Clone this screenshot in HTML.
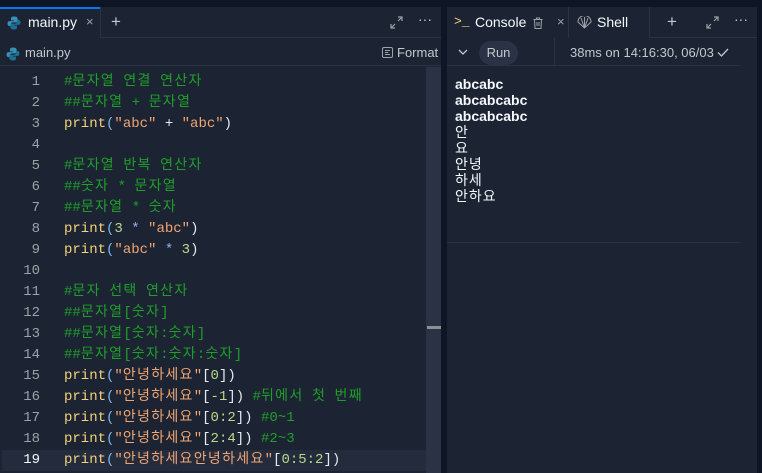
<!DOCTYPE html>
<html><head><meta charset="utf-8"><style>
*{margin:0;padding:0;box-sizing:border-box}
body{width:762px;height:473px;background:#0e1525;position:relative;overflow:hidden;font-family:"Liberation Sans","Noto Sans CJK KR",sans-serif;color:#f5f9fc}
.panel{position:absolute;background:#1c2333}
#ed{left:0;top:7px;width:441px;height:466px}
#co{left:447px;top:7px;width:310px;height:466px}
.tabbar{position:absolute;left:0;top:0;right:0;height:31px;border-bottom:1px solid #2b3245}
.abs{position:absolute}
.code{position:absolute;left:0;top:65px;font-family:"Liberation Mono","Noto Sans CJK KR",monospace;font-size:14px}
.ln{position:absolute;height:21px;line-height:21px;white-space:pre}
.num{width:40px;text-align:right;color:#9da2a6;left:0}
.txt{left:64px}
.k{letter-spacing:1.3px}
.c{color:#1f9f2a}.p{color:#f2d27a}.s{color:#f1a572}.n{color:#b6d98a}.b{color:#7fb8ef}.o{color:#8fb4f5}.w{color:#e6e9ee}
.out{position:absolute;left:8px;font-size:14px;line-height:16px}
.outk{font-family:"Noto Sans CJK KR",sans-serif;letter-spacing:1px}
</style></head><body>
<div class="panel" id="ed">
 <div class="tabbar" style="left:101px"></div>
 <div class="abs" style="left:0;top:0;width:101px;height:2px;background:#0079f2"></div>
 <div class="abs" style="left:100px;top:0;width:1px;height:31px;background:#2b3245"></div>
 <svg class="abs" style="left:7px;top:9px" width="14" height="14" viewBox="0 0 14 14"><path d="M7 0.5c-3 0-3 1.3-3 2.5v1.5h3v.6H2.5C1 5.1.5 6.3.5 7.5s.6 2.6 2 2.6H4V8.4c0-1.2 1-2 2-2h3c1 0 1.7-.8 1.7-1.7V3C10.7 1.6 9.6.5 7 .5z" fill="#3a8fb7"/><path d="M7 13.5c3 0 3-1.3 3-2.5V9.5H7v-.6h4.5c1.5 0 2-1.2 2-2.4s-.6-2.6-2-2.6H10v1.7c0 1.2-1 2-2 2H5c-1 0-1.7.8-1.7 1.7V11c0 1.4 1.1 2.5 3.7 2.5z" fill="#1d6f93"/></svg>
 <div class="abs" style="left:28px;top:7px;font-size:14px;color:#f5f9fc">main.py</div>
 <div class="abs" style="left:86px;top:7px;font-size:13px;color:#9da2a6">×</div>
 <div class="abs" style="left:111px;top:5px;font-size:17px;color:#c2c8cc">+</div>
 <svg class="abs" style="left:390px;top:9px" width="13" height="13" viewBox="0 0 13 13" fill="none" stroke="#9da2a6" stroke-width="1.2"><path d="M8 1h4v4M12 1L8 5M5 12H1V8M1 12l4-4"/></svg>
 <div class="abs" style="left:418px;top:4px;font-size:14px;color:#c2c8cc">···</div>
 <div class="abs" style="left:0;top:31px;width:441px;height:28px;border-bottom:1px solid #2b3245"></div>
 <svg class="abs" style="left:6px;top:40px" width="14" height="14" viewBox="0 0 14 14"><path d="M7 0.5c-3 0-3 1.3-3 2.5v1.5h3v.6H2.5C1 5.1.5 6.3.5 7.5s.6 2.6 2 2.6H4V8.4c0-1.2 1-2 2-2h3c1 0 1.7-.8 1.7-1.7V3C10.7 1.6 9.6.5 7 .5z" fill="#3a8fb7"/><path d="M7 13.5c3 0 3-1.3 3-2.5V9.5H7v-.6h4.5c1.5 0 2-1.2 2-2.4s-.6-2.6-2-2.6H10v1.7c0 1.2-1 2-2 2H5c-1 0-1.7.8-1.7 1.7V11c0 1.4 1.1 2.5 3.7 2.5z" fill="#1d6f93"/></svg>
 <div class="abs" style="left:25px;top:38px;font-size:13px;color:#c2c8cc">main.py</div>
 <svg class="abs" style="left:382px;top:40px" width="11" height="11" viewBox="0 0 11 11" fill="none" stroke="#9da2a6"><rect x=".5" y=".5" width="10" height="10" rx="1.5"/><path d="M3 3.5h5M3 5.5h3M3 7.5h5"/></svg>
 <div class="abs" style="left:397px;top:38px;font-size:13px;color:#c2c8cc">Format</div>
 <div class="abs" style="left:426px;top:60px;width:15px;height:406px;background:#2b3245"></div>
 <div class="abs" style="left:427px;top:319px;width:14px;height:3px;background:#8a8f98"></div>
 <div class="abs" style="left:2px;top:443px;width:424px;height:21px;background:#232b3d"></div>
 <div class="code">
  <div class="ln num" style="top:0">1</div><div class="ln txt c" style="top:0">#<span class="k">문자열</span> <span class="k">연결</span> <span class="k">연산자</span></div>
  <div class="ln num" style="top:21px">2</div><div class="ln txt c" style="top:21px">##<span class="k">문자열</span> + <span class="k">문자열</span></div>
  <div class="ln num" style="top:42px">3</div><div class="ln txt" style="top:42px"><span class="p">print</span><span class="b">(</span><span class="s">"abc"</span> <span class="w">+</span> <span class="s">"abc"</span><span class="w">)</span></div>
  <div class="ln num" style="top:63px">4</div>
  <div class="ln num" style="top:84px">5</div><div class="ln txt c" style="top:84px">#<span class="k">문자열</span> <span class="k">반복</span> <span class="k">연산자</span></div>
  <div class="ln num" style="top:105px">6</div><div class="ln txt c" style="top:105px">##<span class="k">숫자</span> * <span class="k">문자열</span></div>
  <div class="ln num" style="top:126px">7</div><div class="ln txt c" style="top:126px">##<span class="k">문자열</span> * <span class="k">숫자</span></div>
  <div class="ln num" style="top:147px">8</div><div class="ln txt" style="top:147px"><span class="p">print</span><span class="b">(</span><span class="n">3</span> <span class="o">*</span> <span class="s">"abc"</span><span class="w">)</span></div>
  <div class="ln num" style="top:168px">9</div><div class="ln txt" style="top:168px"><span class="p">print</span><span class="b">(</span><span class="s">"abc"</span> <span class="o">*</span> <span class="n">3</span><span class="w">)</span></div>
  <div class="ln num" style="top:189px">10</div>
  <div class="ln num" style="top:210px">11</div><div class="ln txt c" style="top:210px">#<span class="k">문자</span> <span class="k">선택</span> <span class="k">연산자</span></div>
  <div class="ln num" style="top:231px">12</div><div class="ln txt c" style="top:231px">##<span class="k">문자열</span>[<span class="k">숫자</span>]</div>
  <div class="ln num" style="top:252px">13</div><div class="ln txt c" style="top:252px">##<span class="k">문자열</span>[<span class="k">숫자</span>:<span class="k">숫자</span>]</div>
  <div class="ln num" style="top:273px">14</div><div class="ln txt c" style="top:273px">##<span class="k">문자열</span>[<span class="k">숫자</span>:<span class="k">숫자</span>:<span class="k">숫자</span>]</div>
  <div class="ln num" style="top:294px">15</div><div class="ln txt" style="top:294px"><span class="p">print</span><span class="b">(</span><span class="s">"<span class="k">안녕하세요</span>"</span><span class="w">[</span><span class="n">0</span><span class="w">])</span></div>
  <div class="ln num" style="top:315px">16</div><div class="ln txt" style="top:315px"><span class="p">print</span><span class="b">(</span><span class="s">"<span class="k">안녕하세요</span>"</span><span class="w">[</span><span class="n">-1</span><span class="w">])</span> <span class="c">#<span class="k">뒤에서</span> <span class="k">첫</span> <span class="k">번째</span></span></div>
  <div class="ln num" style="top:336px">17</div><div class="ln txt" style="top:336px"><span class="p">print</span><span class="b">(</span><span class="s">"<span class="k">안녕하세요</span>"</span><span class="w">[</span><span class="n">0:2</span><span class="w">])</span> <span class="c">#0~1</span></div>
  <div class="ln num" style="top:357px">18</div><div class="ln txt" style="top:357px"><span class="p">print</span><span class="b">(</span><span class="s">"<span class="k">안녕하세요</span>"</span><span class="w">[</span><span class="n">2:4</span><span class="w">])</span> <span class="c">#2~3</span></div>
  <div class="ln num" style="top:378px;color:#f5f9fc">19</div><div class="ln txt" style="top:378px"><span class="p">print</span><span class="b">(</span><span class="s">"<span class="k">안녕하세요안녕하세요</span>"</span><span class="w">[</span><span class="n">0:5:2</span><span class="w">])</span></div>
 </div>
</div>
<div class="panel" id="co">
 <div class="tabbar" style="left:202px"></div>
 <div class="abs" style="left:121px;top:0;width:1px;height:31px;background:#2b3245"></div>
 <div class="abs" style="left:202px;top:0;width:1px;height:31px;background:#2b3245"></div>
 <div class="abs" style="left:7px;top:7px;font-size:13px;color:#f2d27a;font-family:'Liberation Mono',monospace">&gt;_</div>
 <div class="abs" style="left:28px;top:7px;font-size:14px;color:#f5f9fc">Console</div>
 <svg class="abs" style="left:86px;top:10px" width="10" height="12" viewBox="0 0 10 12" fill="none" stroke="#9da2a6"><path d="M.5 2.5h9M3.5 2.5V1h3v1.5M1.5 2.5l.5 9h6l.5-9M4 5v4M6 5v4"/></svg>
 <div class="abs" style="left:110px;top:7px;font-size:13px;color:#9da2a6">×</div>
 <svg class="abs" style="left:130px;top:9px" width="15" height="13" viewBox="0 0 15 13" fill="none" stroke="#9da2a6"><path d="M7.5 12L1 6a6.5 6.5 0 0113 0zM7.5 12L4 2M7.5 12V1M7.5 12l3.5-10"/></svg>
 <div class="abs" style="left:150px;top:7px;font-size:14px;color:#f5f9fc">Shell</div>
 <div class="abs" style="left:220px;top:5px;font-size:17px;color:#c2c8cc">+</div>
 <svg class="abs" style="left:259px;top:9px" width="13" height="13" viewBox="0 0 13 13" fill="none" stroke="#9da2a6" stroke-width="1.2"><path d="M8 1h4v4M12 1L8 5M5 12H1V8M1 12l4-4"/></svg>
 <div class="abs" style="left:287px;top:4px;font-size:14px;color:#c2c8cc">···</div>
 <div class="abs" style="left:0;top:31px;width:293px;height:28px;border-bottom:1px solid #2b3245"></div>
 <svg class="abs" style="left:11px;top:42px" width="10" height="7" viewBox="0 0 10 7" fill="none" stroke="#c2c8cc" stroke-width="1.3"><path d="M1 1l4 4 4-4"/></svg>
 <div class="abs" style="left:32px;top:34px;width:39px;height:24px;border-radius:12px;background:#2b3245;font-size:13px;color:#c2c8cc;text-align:center;line-height:24px">Run</div>
 <div class="abs" style="left:107px;top:31px;width:1px;height:28px;background:#2b3245"></div>
 <div class="abs" style="left:123px;top:38px;font-size:13px;color:#c2c8cc">38ms on 14:16:30, 06/03</div>
 <svg class="abs" style="left:270px;top:41px" width="12" height="9" viewBox="0 0 12 9" fill="none" stroke="#c2c8cc" stroke-width="1.3"><path d="M1 4.5l3.5 3.5L11 1"/></svg>
 <div class="abs" style="left:0;top:235px;width:293px;height:1px;background:#2b3245"></div>
 <div class="out" style="top:69px;font-weight:bold">abcabc<br>abcabcabc<br>abcabcabc</div>
 <div class="out outk" style="top:117px">안<br>요<br>안녕<br>하세<br>안하요</div>
</div>
</body></html>
